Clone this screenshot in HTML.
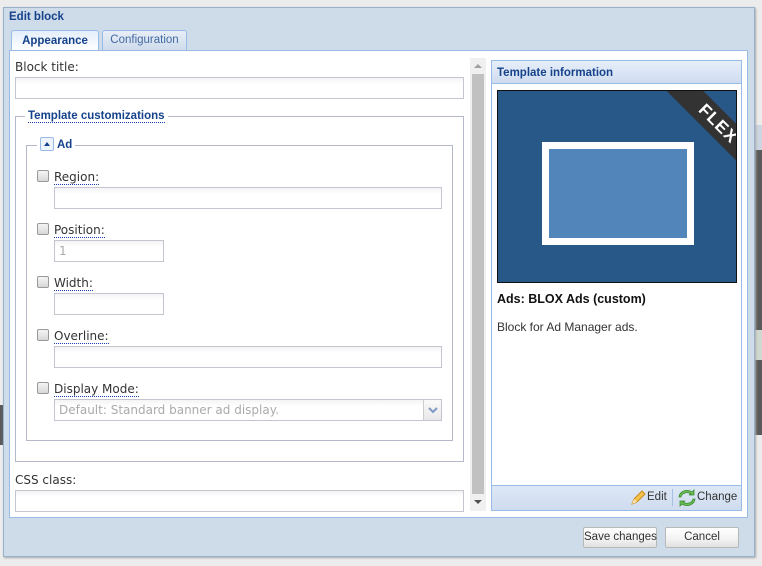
<!DOCTYPE html>
<html><head><meta charset="utf-8"><style>
*{box-sizing:border-box;margin:0;padding:0}
body{width:762px;height:566px;background:#ececec;font-family:"DejaVu Sans","Liberation Sans",sans-serif;font-size:12px;color:#333;position:relative;overflow:hidden}
.a{position:absolute;white-space:nowrap}
.b{font-family:"Liberation Sans",sans-serif;font-weight:bold;font-size:11.5px;color:#15428b}
.inp{position:absolute;background:#fff;border:1px solid #c5c5d0;background:linear-gradient(#f4f4f6,#fff 6px)}
.lbl{position:absolute;font-size:12px;color:#333}
.u{border-bottom:1px dotted #1a3fb0}
.cb{position:absolute;width:12px;height:12px;border:1px solid #999;border-radius:2px;background:linear-gradient(#f4f4f4,#d8d8d8)}
.btn{position:absolute;height:21px;border:1px solid #b8b8b8;border-radius:2px;background:linear-gradient(#fff,#f2f2f2 60%,#e0e0e0);font-family:"Liberation Sans",sans-serif;font-size:11.5px;color:#333;text-align:center;line-height:19px;white-space:nowrap}
</style></head><body>
<div class="a" style="left:754px;top:125px;width:8px;height:310px;background:#5a5a5a"></div>
<div class="a" style="left:754px;top:125px;width:8px;height:25px;background:#ccd5e0"></div>
<div class="a" style="left:754px;top:330px;width:8px;height:30px;background:#cfd9cf"></div>
<div class="a" style="left:0;top:405px;width:4px;height:40px;background:#5a5a5a"></div>
<div class="a" style="left:3px;top:7px;width:752px;height:550px;background:#cedbe9;border:1px solid #99b0cc;box-shadow:1px 1px 2px #aaa"></div>
<div class="a b" style="left:9px;top:11px">Edit block</div>
<div class="a b" style="left:11px;top:30px;width:88px;height:21px;background:linear-gradient(#e4eefa,#fff);border:1px solid #99bbe8;border-bottom:none;border-radius:3px 3px 0 0;text-align:center;line-height:20px">Appearance</div>
<div class="a" style="left:102px;top:30px;width:85px;height:20px;background:linear-gradient(#e8eef6,#cfdcec);border:1px solid #99bbe8;border-bottom:none;border-radius:3px 3px 0 0;color:#416aa3;font-family:'Liberation Sans',sans-serif;font-size:11.5px;text-align:center;line-height:19px">Configuration</div>
<div class="a" style="left:9px;top:50px;width:739px;height:468px;background:#fff;border:1px solid #99bbe8"></div>
<div class="lbl" style="left:15px;top:60px">Block title:</div>
<div class="inp" style="left:15px;top:77px;width:449px;height:22px"></div>
<div class="a" style="left:15px;top:116px;width:449px;height:346px;border:1px solid #b5b8c8"></div>
<div class="a b" style="left:25px;top:110px;background:#fff;padding:0 3px"><span class="u">Template customizations</span></div>
<div class="a" style="left:26px;top:145px;width:427px;height:296px;border:1px solid #b5b8c8"></div>
<div class="a b" style="left:37px;top:137px;background:#fff;padding:0 3px;line-height:15px"><span style="display:inline-block;width:14px;height:14px;border:1px solid #99bbe8;border-radius:2px;vertical-align:-3px;margin-right:3px;position:relative;background:#eef4fb"><span style="position:absolute;left:3px;top:4px;border-left:3px solid transparent;border-right:3px solid transparent;border-bottom:4px solid #15428b"></span></span>Ad</div>
<div class="cb" style="left:37px;top:170px"></div><div class="lbl" style="left:54px;top:170px"><span class="u">Region:</span></div>
<div class="inp" style="left:54px;top:187px;width:388px;height:22px"></div>
<div class="cb" style="left:37px;top:223px"></div><div class="lbl" style="left:54px;top:223px"><span class="u">Position:</span></div>
<div class="inp" style="left:54px;top:240px;width:110px;height:22px;color:#aaa;padding:3px 4px">1</div>
<div class="cb" style="left:37px;top:276px"></div><div class="lbl" style="left:54px;top:276px"><span class="u">Width:</span></div>
<div class="inp" style="left:54px;top:293px;width:110px;height:22px"></div>
<div class="cb" style="left:37px;top:329px"></div><div class="lbl" style="left:54px;top:329px"><span class="u">Overline:</span></div>
<div class="inp" style="left:54px;top:346px;width:388px;height:22px"></div>
<div class="cb" style="left:37px;top:382px"></div><div class="lbl" style="left:54px;top:382px"><span class="u">Display Mode:</span></div>
<div class="inp" style="left:54px;top:399px;width:388px;height:22px;color:#aaa;padding:3px 4px">Default: Standard banner ad display.</div>
<div class="a" style="left:423px;top:400px;width:18px;height:20px;border-left:1px solid #ccc;background:linear-gradient(#fafafa,#e8e8e8)"><svg width="18" height="20"><path d="M5 8l4 4 4-4" fill="none" stroke="#7d98c4" stroke-width="2"/></svg></div>
<div class="lbl" style="left:15px;top:473px">CSS class:</div>
<div class="inp" style="left:15px;top:490px;width:449px;height:22px"></div>
<div class="a" style="left:470px;top:58px;width:16px;height:453px;background:#f0f0f0"></div>
<div class="a" style="left:472px;top:74px;width:12px;height:420px;background:#c1c1c1"></div>
<div class="a" style="left:474px;top:64px;border-left:4px solid transparent;border-right:4px solid transparent;border-bottom:4px solid #a0a0a0"></div>
<div class="a" style="left:474px;top:500px;border-left:4px solid transparent;border-right:4px solid transparent;border-top:4px solid #505050"></div>
<div class="a" style="left:491px;top:60px;width:251px;height:451px;border:1px solid #99bbe8;background:#fff"></div>
<div class="a b" style="left:492px;top:61px;width:249px;height:23px;background:linear-gradient(#e6eef9,#cfdcf0);border-bottom:1px solid #99bbe8;padding:6px 5px">Template information</div>
<div class="a" style="left:497px;top:90px;width:240px;height:193px;background:#285887;border:1px solid #111;overflow:hidden">
 <div class="a" style="left:44px;top:51px;width:152px;height:103px;background:#fff"></div>
 <div class="a" style="left:51px;top:58px;width:138px;height:89px;background:#5286bb"></div>
 <div class="a" style="left:150px;top:20px;width:140px;height:26px;background:#333;transform:rotate(45deg);color:#fff;font-weight:bold;font-size:17px;text-align:center;line-height:26px;letter-spacing:1px;font-family:'Liberation Sans',sans-serif">FLEX</div>
</div>
<div class="a" style="left:497px;top:292px;font-family:'Liberation Sans',sans-serif;font-weight:bold;font-size:12.5px;color:#111">Ads: BLOX Ads (custom)</div>
<div class="a" style="left:497px;top:320px;font-size:12px;color:#333;font-family:'Liberation Sans',sans-serif">Block for Ad Manager ads.</div>
<div class="a" style="left:492px;top:485px;width:249px;height:25px;background:linear-gradient(#dde8f6,#cfdcef);border-top:1px solid #99bbe8"></div>
<svg class="a" style="left:629px;top:489px" width="18" height="18"><path d="M3 15l2-5 8-8 3 3-8 8z" fill="#f5c24a" stroke="#c68a1a"/><path d="M3 15l2-5 3 3z" fill="#fbe5b0"/></svg>
<div class="a" style="left:647px;top:491px;font-size:11.5px;color:#333;font-family:'Liberation Sans',sans-serif">Edit</div>
<div class="a" style="left:672px;top:489px;width:1px;height:17px;background:#a8bede"></div>
<svg class="a" style="left:678px;top:489px" width="18" height="18"><path d="M3 8a6 5 0 0 1 10-3l-2 1h5V1l-2 2A8 7 0 0 0 1 8z" fill="#6cc05a" stroke="#3a8a2a" stroke-width=".8"/><path d="M15 10a6 5 0 0 1-10 3l2-1H2v5l2-2a8 7 0 0 0 13-5z" fill="#6cc05a" stroke="#3a8a2a" stroke-width=".8"/></svg>
<div class="a" style="left:697px;top:491px;font-size:11.5px;color:#333;font-family:'Liberation Sans',sans-serif">Change</div>
<div class="btn" style="left:583px;top:527px;width:74px">Save changes</div>
<div class="btn" style="left:665px;top:527px;width:74px">Cancel</div>
</body></html>
